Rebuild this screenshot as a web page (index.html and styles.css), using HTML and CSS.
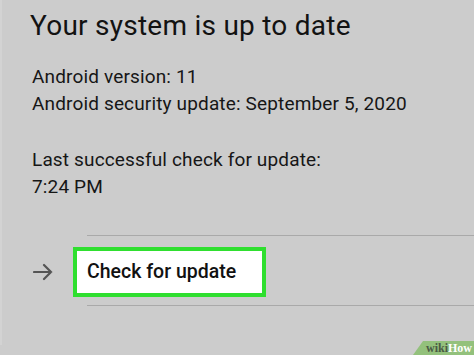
FILE: index.html
```html
<!DOCTYPE html>
<html lang="en">
<head>
    <meta charset="UTF-8">
    <meta name="viewport" content="width=device-width, initial-scale=1.0">
    <title>System update</title>
    <link rel="stylesheet" href="styles.css">
</head>
<body>
    <div class="screen">
        <h1 class="title">Your system is up to date</h1>
        <div class="info first">
            <p>Android version: 11</p>
            <p>Android security update: September 5, 2020</p>
        </div>
        <div class="info second">
            <p>Last successful check for update:</p>
            <p>7:24 PM</p>
        </div>
        <div class="divider top"></div>
        <div class="update-row">
            <svg class="arrow" width="20" height="20" viewBox="0 0 20 20">
                <path d="M1 10 H18 M11 3 L18 10 L11 17" fill="none" stroke="#555" stroke-width="2.2" stroke-linecap="round" stroke-linejoin="miter"/>
            </svg>
            <div class="check-box">Check for update</div>
        </div>
        <div class="divider bottom"></div>
    </div>
    <div class="badge"><span class="wiki">wiki</span><span class="how">How</span></div>
</body>
</html>
```

FILE: styles.css
```css
body {
    margin: 0;
    padding: 0;
    background-color: #cccccc;
    font-family: Roboto, "Noto Sans", sans-serif;
    color: #161616;
    width: 474px;
    height: 355px;
    overflow: hidden;
    position: relative;
}
.screen {
    padding: 10px 0 0 30px;
    border-left: 2px solid #d3d3d3;
    height: 345px;
    box-sizing: border-box;
}
.title {
    font-size: 28px;
    font-weight: 400;
    line-height: 32px;
    margin: 0 0 21px -2px;
    color: #121212;
    letter-spacing: 0.25px;
}
.info p {
    margin: 0;
    font-size: 19px;
    line-height: 27px;
    letter-spacing: 0.15px;
}
.info.second {
    margin-top: 29px;
}
.divider {
    height: 1px;
    background-color: #a9a9a9;
    margin-left: 55px;
}
.divider.top {
    margin-top: 35px;
}
.update-row {
    display: flex;
    align-items: center;
    margin-top: 11px;
    margin-bottom: 8px;
}
.arrow {
    margin-left: 1px;
    margin-right: 20px;
}
.check-box {
    width: 193px;
    height: 50px;
    box-sizing: border-box;
    border: 4px solid #2fdf2f;
    background: #ffffff;
    display: flex;
    align-items: center;
    padding: 0 0 1px 10px;
    font-size: 19.5px;
    font-weight: 500;
    color: #111;
}
.badge {
    position: absolute;
    right: 0;
    bottom: 0;
    width: 61px;
    height: 14px;
    background: #93c17c;
    clip-path: polygon(10px 0, 100% 0, 100% 100%, 0 100%);
    font-family: "Liberation Serif", "DejaVu Serif", serif;
    font-weight: bold;
    font-size: 12px;
    line-height: 14px;
    padding-left: 13px;
    box-sizing: border-box;
    white-space: nowrap;
}
.wiki {
    color: #4a5a44;
}
.how {
    color: #ffffff;
}
```
